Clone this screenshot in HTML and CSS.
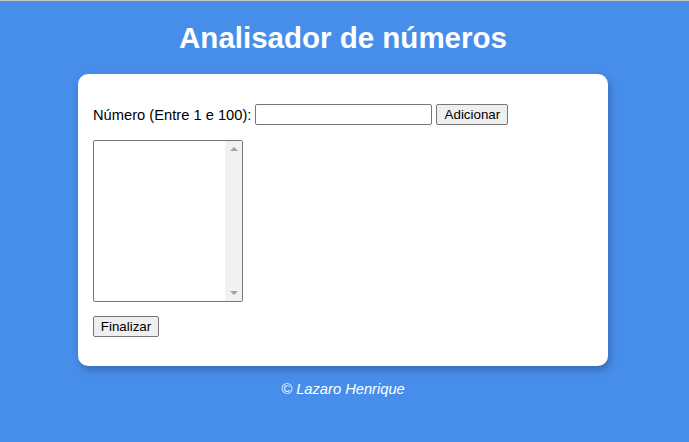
FILE: index.html
```html
<!DOCTYPE html>
<html lang="pt-BR">
<head>
<meta charset="utf-8">
<title>Analisador de números</title>
<link rel="stylesheet" href="styles.css">
</head>
<body>
<header class="header">
  <h1 class="title">Analisador de números</h1>
</header>
<main class="card">
  <div class="row">
    <label class="label" for="num">Número (Entre 1 e 100):</label>
    <input class="field" type="text" id="num">
    <button class="btn btn-add" type="button">Adicionar</button>
  </div>
  <div class="listbox">
    <div class="list-area"></div>
    <div class="scrollbar">
      <span class="arrow arrow-up"></span>
      <span class="arrow arrow-down"></span>
    </div>
  </div>
  <button class="btn btn-finish" type="button">Finalizar</button>
</main>
<footer class="footer">
  <p class="credit">© Lazaro Henrique</p>
</footer>
</body>
</html>
```

FILE: styles.css
```css
html, body {
  margin: 0;
  padding: 0;
}
body {
  background: #478eeb;
  border-top: 1px solid #c9c9c9;
  font-family: "Liberation Sans", Arial, sans-serif;
  color: #000;
  min-height: 441px;
}
.header {
  width: 686px;
  padding-top: 20px;
  padding-bottom: 19px;
}
.title {
  margin: 0;
  text-align: center;
  color: #fff;
  font-size: 29.5px;
  font-weight: bold;
  line-height: 34px;
}
.card {
  box-sizing: border-box;
  width: 530px;
  margin: 0 auto 0 78px;
  background: #fff;
  border-radius: 10px;
  box-shadow: 2px 4px 8px rgba(0, 0, 0, 0.25);
  padding: 30px 15px 29px;
  display: flex;
  flex-direction: column;
  align-items: flex-start;
}
.row {
  display: flex;
  align-items: center;
  height: 21px;
  font-size: 14.7px;
}
.label {
  margin-right: 4px;
}
.field {
  box-sizing: border-box;
  width: 177px;
  height: 21px;
  border: 1px solid #767676;
  border-radius: 2px;
  padding: 1px 2px;
  font-family: inherit;
  font-size: 13.33px;
  margin: 0 4px 0 0;
}
.btn {
  box-sizing: border-box;
  height: 21px;
  background: #efefef;
  border: 1px solid #767676;
  border-radius: 2px;
  font-family: inherit;
  font-size: 13.33px;
  color: #000;
  padding: 0 6px;
  margin: 0;
}
.btn-add {
  width: 72px;
}
.listbox {
  box-sizing: border-box;
  width: 150px;
  height: 162px;
  margin-top: 15px;
  border: 1px solid #767676;
  border-radius: 2px;
  display: flex;
  background: #fff;
}
.list-area {
  flex: 1;
}
.scrollbar {
  width: 17px;
  background: #f1f1f1;
  display: flex;
  flex-direction: column;
  justify-content: space-between;
  align-items: center;
  padding: 6px 0;
}
.arrow {
  width: 0;
  height: 0;
  border-left: 4px solid transparent;
  border-right: 4px solid transparent;
}
.arrow-up {
  border-bottom: 4px solid #a3a3a3;
}
.arrow-down {
  border-top: 4px solid #a3a3a3;
}
.btn-finish {
  margin-top: 14px;
  width: 66px;
}
.footer {
  width: 686px;
  margin-top: 14px;
}
.credit {
  margin: 0;
  text-align: center;
  color: #fff;
  font-style: italic;
  font-size: 14.7px;
  line-height: 18px;
}
```
